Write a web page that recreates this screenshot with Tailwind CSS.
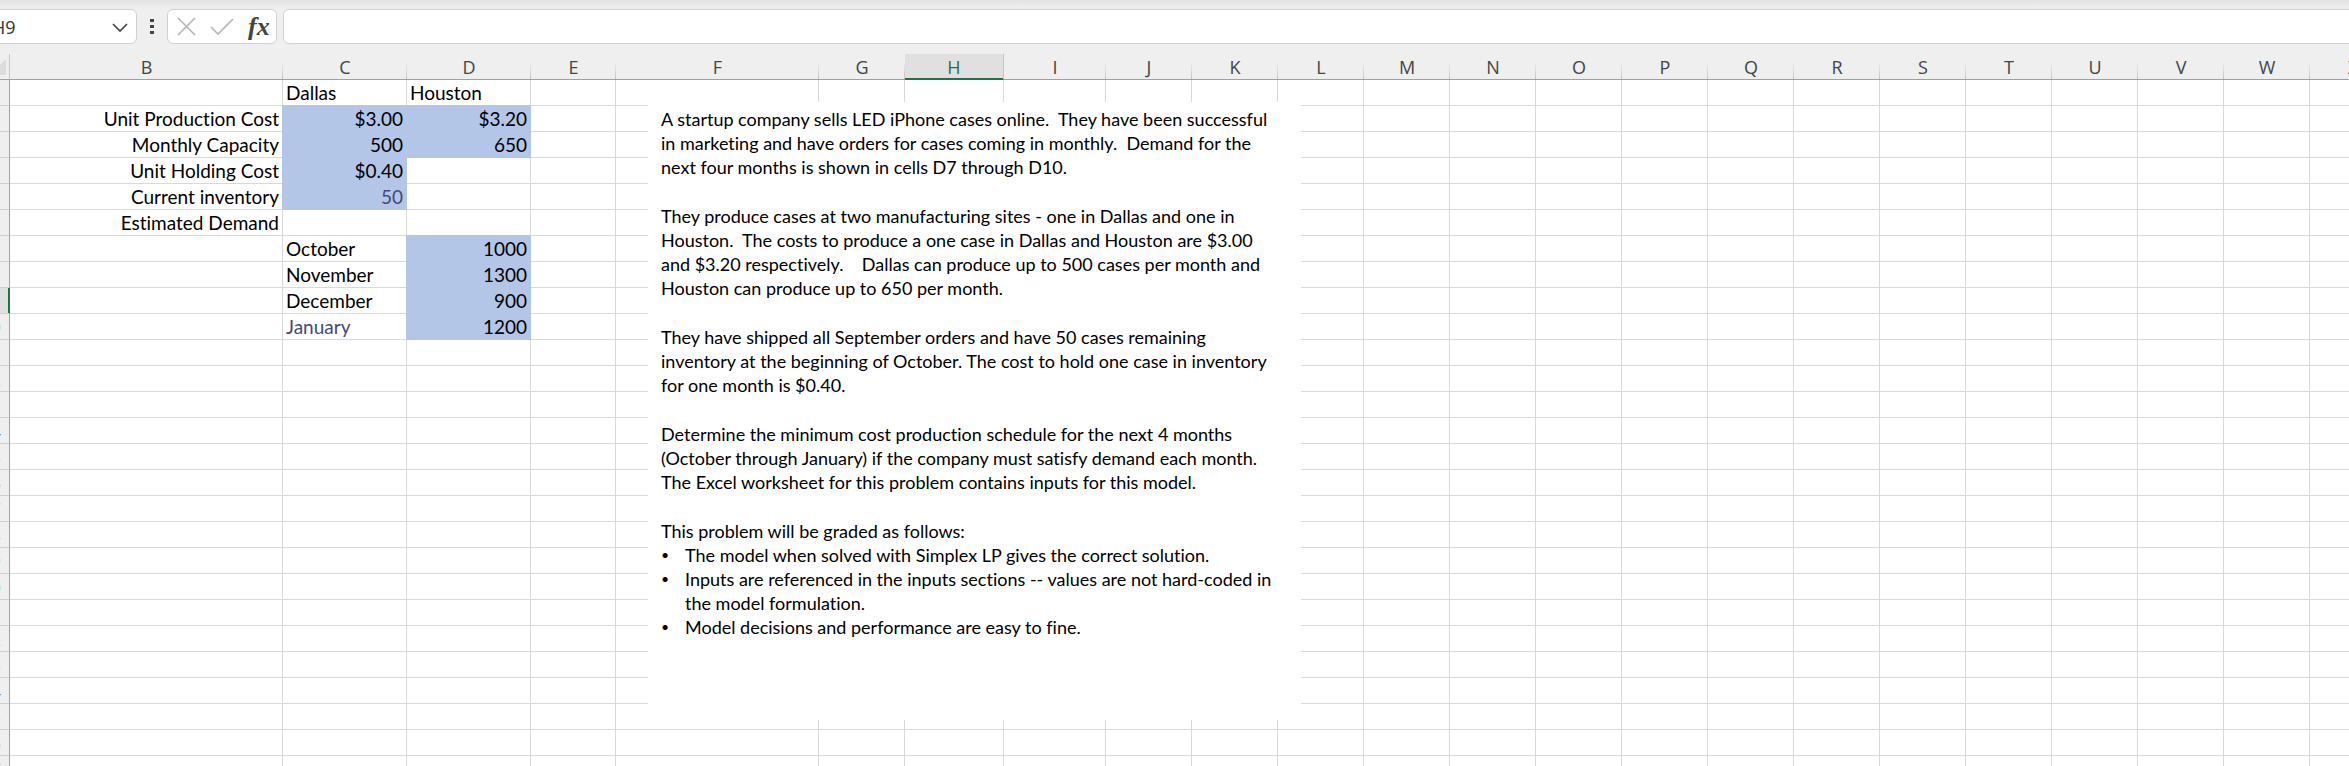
<!DOCTYPE html>
<html lang="en">
<head>
  <meta charset="UTF-8" />
  <meta name="viewport" content="width=device-width, initial-scale=1.0" />
  <title>Production Planning</title>
  <script src="https://cdn.jsdelivr.net/npm/@tailwindcss/browser@4"></script>
</head>
<body>
  <div class="flex flex-col h-screen overflow-hidden bg-[#efefef] text-black font-['Lato',sans-serif] [font-variant-ligatures:none]">
    <div class="shrink-0 h-2 bg-linear-to-b from-[#e2e2e2] to-[#efefef]"></div>

    <!-- formula bar -->
    <div class="flex shrink-0 items-center pt-px h-9">
      <div class="relative -ml-4">
        <label for="name-box" class="sr-only">Name box</label>
        <input id="name-box" type="text" value="H9"
          class="block w-[153px] h-[35px] pl-[7px] pr-8 border border-[#d0d0d0] rounded-md bg-white text-lg text-[#333] font-['Open_Sans',sans-serif]" />
        <button type="button" aria-label="Show names" class="absolute right-2 top-2 p-px">
          <svg class="w-4 h-4" viewBox="0 0 16 16" fill="none" stroke="#444" stroke-width="1.6"><path d="M1 6l7 7 7-7" /></svg>
        </button>
      </div>
      <svg class="w-[30px] h-[35px]" viewBox="0 0 30 35" fill="#444">
        <path d="M13 10h4v3h-4zM13 16h4v3h-4zM13 22h4v3h-4z" />
      </svg>
      <div class="flex items-center w-[110px] h-[35px] pl-[9px] gap-[14px] border border-[#d0d0d0] rounded-md bg-white">
        <button type="button" aria-label="Cancel">
          <svg class="w-[19px] h-[19px]" viewBox="0 0 19 19" fill="none" stroke="#b4b4b4" stroke-width="1.6"><path d="M1 1l17 17M18 1L1 18" /></svg>
        </button>
        <button type="button" aria-label="Enter">
          <svg class="w-6 h-[19px]" viewBox="0 0 24 19" fill="none" stroke="#b4b4b4" stroke-width="1.6"><path d="M1 10l7 7L23 2" /></svg>
        </button>
        <button type="button" aria-label="Insert function"
          class="text-[26px] leading-8 font-bold italic text-[#444] font-['Liberation_Serif',serif]">fx</button>
      </div>
      <label for="formula" class="sr-only">Formula</label>
      <input id="formula" type="text"
        class="flex-1 ml-[6px] -mr-2 h-[35px] px-2 border border-[#d0d0d0] rounded-md bg-white text-lg" />
    </div>

    <!-- sheet, scrolled a little to the right so the row numbers are mostly hidden -->
    <div class="flex-1 min-h-0 overflow-hidden pt-[10px]">
      <div class="relative -ml-[26px]">
        <table class="table-fixed w-0 border-separate border-spacing-0 text-[19px] leading-6">
          <colgroup id="cols"></colgroup>
          <thead><tr id="letters"></tr></thead>
          <tbody id="rows"></tbody>
        </table>

        <div class="absolute left-[674px] top-12 w-[653px] h-[618px] pl-[13px] pt-[5px] bg-white text-lg leading-6 whitespace-nowrap">
          <p class="mb-[25px]">A startup company sells LED iPhone cases online.&nbsp; They have been successful<br>
            in marketing and have orders for cases coming in monthly.&nbsp; Demand for the<br>
            next four months is shown in cells D7 through D10.</p>
          <p class="mb-[25px]">They produce cases at two manufacturing sites - one in Dallas and one in<br>
            Houston.&nbsp; The costs to produce a one case in Dallas and Houston are $3.00<br>
            and $3.20 respectively.&nbsp;&nbsp;&nbsp; Dallas can produce up to 500 cases per month and<br>
            Houston can produce up to 650 per month.</p>
          <p class="mb-[25px]">They have shipped all September orders and have 50 cases remaining<br>
            inventory at the beginning of October. The cost to hold one case in inventory<br>
            for one month is $0.40.</p>
          <p class="mb-[25px]">Determine the minimum cost production schedule for the next 4 months<br>
            (October through January) if the company must satisfy demand each month.<br>
            The Excel worksheet for this problem contains inputs for this model.</p>
          <p>This problem will be graded as follows:</p>
          <ul>
            <li class="flex"><span class="w-6 text-sm leading-6">•</span><span>The model when solved with Simplex LP gives the correct solution.</span></li>
            <li class="flex"><span class="w-6 text-sm leading-6">•</span><span>Inputs are referenced in the inputs sections -- values are not hard-coded in<br>
              the model formulation.</span></li>
            <li class="flex"><span class="w-6 text-sm leading-6">•</span><span>Model decisions and performance are easy to fine.</span></li>
          </ul>
        </div>
      </div>
    </div>
  </div>

  <script>
    const widths = { B: 273, C: 124, D: 124, E: 85, F: 203, H: 99, I: 102 };
    const letters = "BCDEFGHIJKLMNOPQRSTUVWX".split("");
    const rowCount = 27;

    const cells = {
      C1: "Dallas", D1: "Houston",
      B2: "Unit Production Cost", C2: "$3.00", D2: "$3.20",
      B3: "Monthly Capacity", C3: "500", D3: "650",
      B4: "Unit Holding Cost", C4: "$0.40",
      B5: "Current inventory", C5: "50",
      B6: "Estimated Demand",
      C7: "October", D7: "1000",
      C8: "November", D8: "1300",
      C9: "December", D9: "900",
      C10: "January", D10: "1200",
    };
    const filled = ["C2", "D2", "C3", "D3", "C4", "C5", "D7", "D8", "D9", "D10"];
    const muted = ["C5", "C10"];

    document.getElementById("cols").innerHTML =
      `<col style="width:36px">` +
      letters.map((l) => `<col style="width:${widths[l] || 86}px">`).join("");

    // column letters, H is the active one
    const head = "h-[26px] p-0 text-lg leading-6 font-normal font-['Open_Sans',sans-serif] border-b";
    document.getElementById("letters").innerHTML =
      `<th class="${head} border-r border-r-[#c6c6c6] border-b-[#a0a0a0]">
        <svg class="ml-auto w-[9px] h-[25px]" viewBox="0 0 9 25" fill="#dcdcdc"><path d="M0 11l6-6v16H0z" /></svg>
      </th>` +
      letters.map((l) => l === "H"
        ? `<th class="${head} border-b-[#217346] bg-[#e0e0e0] text-[#217346] border-r border-r-[#c6c6c6] shadow-[inset_0_-1px_0_#217346]">${l}</th>`
        : `<th class="${head} border-b-[#a0a0a0] text-[#444] bg-[linear-gradient(to_top,#c2c2c2,#efefef)] bg-no-repeat bg-right-bottom bg-size-[1px_18px]">${l}</th>`
      ).join("");

    let html = "";
    for (let r = 1; r <= rowCount; r++) {
      const active = r === 9
        ? "bg-[#e0e0e0] border-r-[#217346] shadow-[inset_-1px_0_0_#217346] text-[#217346]"
        : "border-r-[#a0a0a0] text-[#444]";
      html += `<tr><th class="h-[26px] p-0 pr-[2px] text-lg leading-6 font-normal font-['Open_Sans',sans-serif] border-r border-b border-b-[#cfcfcf] ${active}">${r}</th>`;
      for (const l of letters) {
        const id = l + r;
        const fill = filled.includes(id)
          ? "bg-[#b4c6e7] border-[#b4c6e7] shadow-[-1px_-1px_0_#b4c6e7]"
          : "bg-white border-[#d9d9d9]";
        const align = l === "B" || filled.includes(id) ? "text-right" : "text-left";
        const color = muted.includes(id) ? "text-[#44487a]" : "";
        html += `<td class="h-[26px] p-0 px-[3px] border-r border-b whitespace-nowrap ${fill} ${align} ${color}">${cells[id] || ""}</td>`;
      }
      html += "</tr>";
    }
    document.getElementById("rows").innerHTML = html;
  </script>
</body>
</html>
